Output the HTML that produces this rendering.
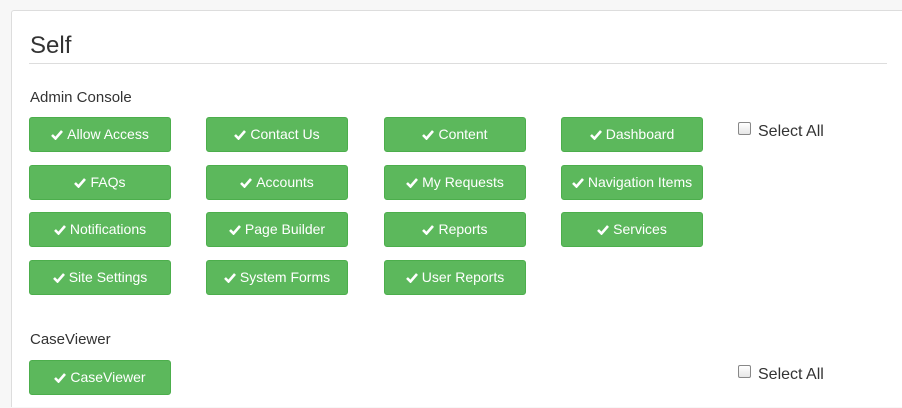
<!DOCTYPE html>
<html><head><style>
html,body{margin:0;height:408px;overflow:hidden}
body{background:#f7f7f7;font-family:"Liberation Sans",sans-serif;width:902px;position:relative}
.panel{position:absolute;left:11px;top:10px;width:900px;height:396px;background:#fff;border:1px solid #ddd;border-bottom:none;border-radius:3px 3px 0 0}
h1{position:absolute;left:30px;top:31px;margin:0;font-size:24px;font-weight:normal;color:#333;line-height:30px}
.hr{position:absolute;left:29px;top:63px;width:858px;height:1px;background:#ddd}
.lbl{position:absolute;left:30px;font-size:15px;color:#333}
.b{position:absolute;width:140px;height:33px;background:#5cb85c;border:1px solid #4cae4c;border-radius:3px;color:#fff;font-size:14px;line-height:33px;text-align:center;white-space:nowrap}
.b svg{vertical-align:-1px;margin-right:4px}
.sa{position:absolute;left:738px;font-size:16px;color:#333}
.cb{display:inline-block;width:11px;height:11px;border:1px solid #888;border-radius:2px;background:linear-gradient(#fff,#e6e6e6);vertical-align:1px;margin-right:7px}
</style></head><body>
<div class="panel"></div>
<h1>Self</h1>
<div class="hr"></div>
<div class="lbl" style="top:89px">Admin Console</div>
<div class="lbl" style="top:331px">CaseViewer</div>
<div class="sa" style="top:122px"><span class="cb"></span>Select All</div>
<div class="sa" style="top:365px"><span class="cb"></span>Select All</div>
<div id="btns"></div>
<script>
var ck='<svg width="12" height="11" viewBox="0 0 12 11"><path d="M1 6 L4.5 9.5 L11 2" stroke="#fff" stroke-width="2.6" fill="none"/></svg>';
var rows=[["Allow Access","Contact Us","Content","Dashboard"],["FAQs","Accounts","My Requests","Navigation Items"],["Notifications","Page Builder","Reports","Services"],["Site Settings","System Forms","User Reports"]];
var xs=[29,206,384,561],ys=[117,165,212,260],h="";
rows.forEach(function(r,i){r.forEach(function(t,j){h+='<div class="b" style="left:'+xs[j]+'px;top:'+ys[i]+'px">'+ck+t+'</div>';});});
h+='<div class="b" style="left:29px;top:360px">'+ck+'CaseViewer</div>';
document.getElementById("btns").innerHTML=h;
</script>
</body></html>
